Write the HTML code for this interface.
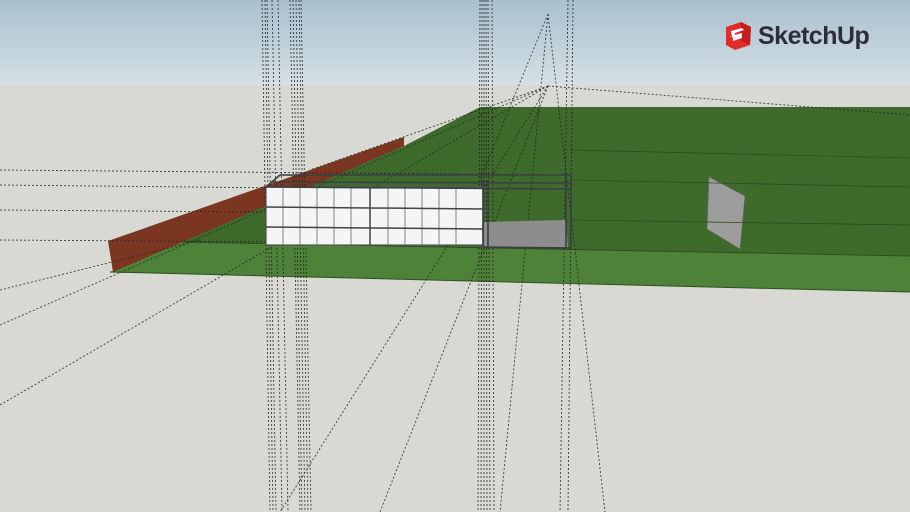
<!DOCTYPE html>
<html><head><meta charset="utf-8"><style>
html,body{margin:0;padding:0;width:910px;height:512px;overflow:hidden;background:#d9d9d3}
.logo{position:absolute;left:724px;top:21px;display:flex;align-items:center}
.logo span{font-family:"Liberation Sans",sans-serif;font-weight:bold;font-size:25px;color:#2c2f3a;margin-left:6px;letter-spacing:-0.5px}
</style></head><body>
<svg width="910" height="512" style="position:absolute;left:0;top:0">
<defs><linearGradient id="sky" x1="0" y1="0" x2="0" y2="1"><stop offset="0" stop-color="#a8c0ce"/><stop offset="1" stop-color="#d6e0e4"/></linearGradient></defs>
<rect x="0" y="0" width="910" height="86" fill="url(#sky)"/>
<rect x="0" y="86" width="910" height="426" fill="#d9d9d3"/>
<polygon points="110,272 404,146 480,107 910,107 910,292 570,283" fill="#3e6b2c"/>
<polygon points="110,272 180,242 910,256 910,292" fill="#4f8239"/>
<line x1="110" y1="272" x2="910" y2="292" stroke="#2f4f22" stroke-width="1"/>
<line x1="180" y1="242" x2="910" y2="256" stroke="#2f4f22" stroke-width="1"/>
<polygon points="108,241 404,137 404,146 113,272" fill="#7b3622"/>
<polygon points="709,177 745,196 740,249 707,229" fill="#9d9d9d" stroke="#666" stroke-width="0.6"/>
<g stroke="#222" stroke-width="0.9" stroke-dasharray="2,2" fill="none" opacity="0.85">
<line x1="262" y1="0" x2="270" y2="512"/><line x1="265" y1="0" x2="273" y2="512"/><line x1="267" y1="0" x2="276" y2="512"/><line x1="272" y1="0" x2="282" y2="512"/>
<line x1="278" y1="0" x2="288" y2="512"/><line x1="290" y1="0" x2="300" y2="512"/><line x1="293" y1="0" x2="302" y2="512"/><line x1="296" y1="0" x2="305" y2="512"/><line x1="299" y1="0" x2="308" y2="512"/><line x1="301" y1="0" x2="311" y2="512"/>
<line x1="480" y1="0" x2="478" y2="512"/><line x1="482" y1="0" x2="481" y2="512"/><line x1="484" y1="0" x2="484" y2="512"/><line x1="486" y1="0" x2="487" y2="512"/><line x1="488" y1="0" x2="490" y2="512"/><line x1="492" y1="0" x2="494" y2="512"/>
<line x1="568" y1="0" x2="560" y2="512"/><line x1="573" y1="0" x2="568" y2="512"/>
<line x1="548" y1="14" x2="500" y2="512"/><line x1="548" y1="14" x2="605" y2="512"/><line x1="548" y1="14" x2="480" y2="180"/>
<line x1="548" y1="86" x2="0" y2="405"/><line x1="548" y1="86" x2="0" y2="325"/><line x1="548" y1="86" x2="280" y2="512"/><line x1="548" y1="86" x2="380" y2="512"/>
<line x1="548" y1="86" x2="310" y2="170"/><line x1="548" y1="86" x2="910" y2="115"/>
<line x1="0" y1="170" x2="570" y2="175"/><line x1="0" y1="185" x2="480" y2="190"/><line x1="0" y1="240" x2="300" y2="242"/><line x1="0" y1="290" x2="200" y2="240"/>
<line x1="0" y1="210" x2="265" y2="212"/>
</g>
<g stroke="#2d4a20" stroke-width="0.8" fill="none">
<line x1="570" y1="150" x2="910" y2="158"/><line x1="570" y1="180" x2="910" y2="187"/><line x1="570" y1="220" x2="910" y2="225"/>
</g>
<rect x="266" y="187" width="217" height="58" fill="#f4f5f6" stroke="#555" stroke-width="1.2"/>
<g stroke="#666" stroke-width="0.8">
<line x1="283" y1="187" x2="283" y2="245"/><line x1="300" y1="187" x2="300" y2="245"/><line x1="317" y1="187" x2="317" y2="245"/><line x1="334" y1="187" x2="334" y2="245"/><line x1="351" y1="187" x2="351" y2="245"/>
<line x1="388" y1="187" x2="388" y2="245"/><line x1="405" y1="187" x2="405" y2="245"/><line x1="422" y1="187" x2="422" y2="245"/><line x1="439" y1="187" x2="439" y2="245"/><line x1="456" y1="187" x2="456" y2="245"/>
</g>
<g stroke="#444" stroke-width="1.5">
<line x1="370" y1="187" x2="370" y2="245"/>
<line x1="266" y1="207" x2="483" y2="209"/><line x1="266" y1="227" x2="483" y2="229"/>
</g>
<polygon points="484,222 566,220 568,247 484,247" fill="#8d8d8d"/>
<g stroke="#3a3f45" stroke-width="1.6" fill="none">
<line x1="280" y1="175" x2="570" y2="175"/><line x1="272" y1="182" x2="570" y2="183"/><line x1="266" y1="187" x2="570" y2="189"/>
<line x1="266" y1="187" x2="280" y2="175"/>
<line x1="483" y1="180" x2="483" y2="247"/><line x1="488" y1="180" x2="488" y2="247"/><line x1="566" y1="175" x2="566" y2="247"/><line x1="571" y1="175" x2="571" y2="247"/>
<line x1="484" y1="247" x2="571" y2="248"/>
</g>
</svg>
<div class="logo">
<svg width="28" height="30" viewBox="0 0 28 30"><polygon points="2,6 17,1 27,6 26,24 11,29 2,24" fill="#e42a2a"/><polygon points="17,1 27,6 26,24 17,20" fill="#c41e1e"/><path d="M7 10 L18 7 L20 9 L11 12 L11 14 L18 12 L18 17 L9 20 L9 17 L15 15 L8 17 Z" fill="#fff"/></svg>
<span>SketchUp</span>
</div>
</body></html>
